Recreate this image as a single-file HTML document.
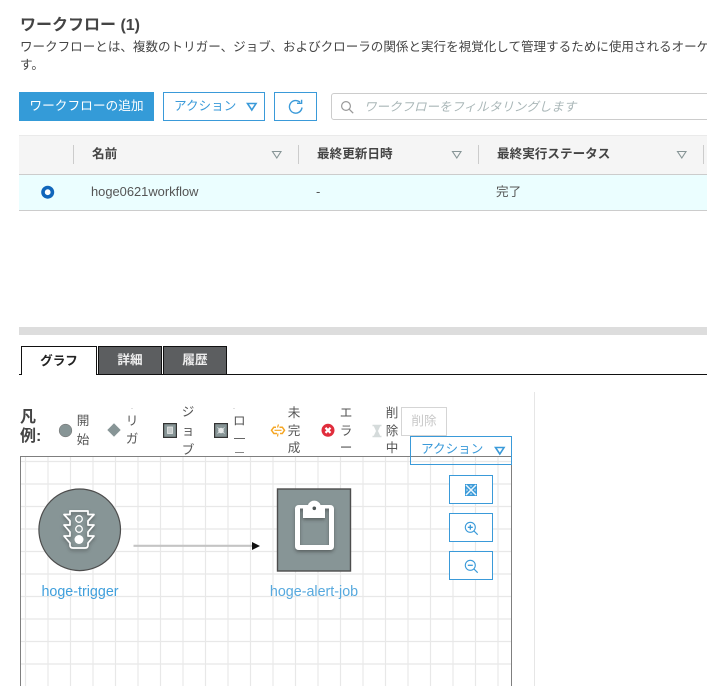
<!DOCTYPE html>
<html lang="ja">
<head>
<meta charset="utf-8">
<title>ワークフロー</title>
<style>
html,body{margin:0;padding:0;background:#fff}
body{width:707px;height:686px;position:relative;overflow:hidden;font-family:"Liberation Sans","Noto Sans CJK JP",sans-serif;color:#444}
.a{position:absolute;white-space:nowrap}
.btn{position:absolute;box-sizing:border-box;border:1px solid #3a9ad9;background:#fff;color:#3a9ad9}
.th{position:absolute;top:145px;font-size:12.6px;font-weight:bold;line-height:19px;color:#444}
.div{position:absolute;top:145px;width:1px;height:19px;background:#ccc}
.leg{position:absolute;font-size:12.6px;line-height:18px;color:#555;width:16px;text-align:center;overflow:hidden;white-space:nowrap}
.leg span{display:block}
svg{position:absolute;overflow:visible}
</style>
</head>
<body>
<div class="a" style="left:20px;top:15px;font-size:16px;font-weight:bold;line-height:22px;color:#444">ワークフロー (1)</div>
<div class="a" style="left:20px;top:38px;font-size:12.55px;line-height:18px;color:#444">ワークフローとは、複数のトリガー、ジョブ、およびクローラの関係と実行を視覚化して管理するために使用されるオーケ</div>
<div class="a" style="left:20px;top:56px;font-size:12.6px;line-height:18px;color:#444">す。</div>

<div class="a" style="left:19px;top:92px;width:135px;height:29px;background:#349bd8;color:#fff;font-size:12.7px;line-height:29px;text-align:center">ワークフローの追加</div>
<div class="btn" style="left:163px;top:92px;width:102px;height:29px"></div>
<div class="a" style="left:174px;top:92px;font-size:12.6px;line-height:28px;color:#3a9ad9">アクション</div>
<svg style="left:246px;top:102px" width="12" height="10"><path d="M1.500 1.500H10L5.800 8Z" fill="none" stroke="#3a9ad9" stroke-width="1.600"/></svg>
<div class="btn" style="left:274px;top:92px;width:43px;height:29px"></div>
<svg style="left:287px;top:99px" width="17" height="16" viewBox="0 0 17 16"><path d="M13 3.200A6.300 6.300 0 1 0 15 8.500" fill="none" stroke="#3a9ad9" stroke-width="1.400"/><path d="M10 4.300H14.600V.8" fill="none" stroke="#3a9ad9" stroke-width="1.400"/></svg>

<div class="a" style="left:331px;top:93px;width:380px;height:27px;box-sizing:border-box;border:1px solid #ccc;border-radius:3px 0 0 3px"></div>
<svg style="left:340px;top:100px" width="15" height="15" viewBox="0 0 15 15"><circle cx="6" cy="6" r="4.400" fill="none" stroke="#999" stroke-width="1.200"/><path d="M9.300 9.300L13.200 13.200" stroke="#999" stroke-width="1.300"/></svg>
<div class="a" style="left:364px;top:98px;font-size:12.5px;line-height:18px;font-style:italic;color:#aab7b8">ワークフローをフィルタリングします</div>

<div class="a" style="left:19px;top:135px;width:688px;height:39px;background:#f5f5f5;border-top:1px solid #eaeaea;box-sizing:border-box"></div>
<div class="a" style="left:19px;top:174px;width:688px;height:1px;background:#ccc"></div>
<div class="a" style="left:19px;top:175px;width:688px;height:35px;background:#ebfeff"></div>
<div class="a" style="left:19px;top:210px;width:688px;height:1px;background:#ccc"></div>
<div class="div" style="left:73px"></div>
<div class="div" style="left:298px"></div>
<div class="div" style="left:478px"></div>
<div class="div" style="left:703px"></div>
<div class="th a" style="left:92px">名前</div>
<div class="th a" style="left:317px">最終更新日時</div>
<div class="th a" style="left:497px">最終実行ステータス</div>
<svg style="left:271px;top:150px" width="12" height="10"><path d="M1.500 1.500H10L5.800 8Z" fill="none" stroke="#879596" stroke-width="1.100"/></svg>
<svg style="left:451px;top:150px" width="12" height="10"><path d="M1.500 1.500H10L5.800 8Z" fill="none" stroke="#879596" stroke-width="1.100"/></svg>
<svg style="left:676px;top:150px" width="12" height="10"><path d="M1.500 1.500H10L5.800 8Z" fill="none" stroke="#879596" stroke-width="1.100"/></svg>
<svg style="left:41px;top:185px" width="14" height="14"><circle cx="6.700" cy="7.200" r="4.700" fill="#fff" stroke="#1166bb" stroke-width="3.600"/></svg>
<div class="a" style="left:91px;top:183px;font-size:12.9px;line-height:18px;color:#555">hoge0621workflow</div>
<div class="a" style="left:316px;top:183px;font-size:13px;line-height:18px;color:#555">-</div>
<div class="a" style="left:496px;top:183px;font-size:12.6px;line-height:18px;color:#555">完了</div>

<div class="a" style="left:19px;top:327px;width:688px;height:8px;background:#ddd"></div>
<div class="a" style="left:19px;top:374px;width:688px;height:1px;background:#111"></div>
<div class="a" style="left:21px;top:346px;width:76px;height:29px;box-sizing:border-box;border:1px solid #111;border-bottom:0;background:#fff;font-size:12.6px;font-weight:bold;color:#222;text-align:center;line-height:28px">グラフ</div>
<div class="a" style="left:98px;top:346px;width:64px;height:28px;box-sizing:border-box;border:1px solid #111;border-bottom:0;background:#5c5e60;font-size:12.6px;font-weight:bold;color:#eee;text-align:center;line-height:27px">詳細</div>
<div class="a" style="left:163px;top:346px;width:64px;height:28px;box-sizing:border-box;border:1px solid #111;border-bottom:0;background:#5c5e60;font-size:12.6px;font-weight:bold;color:#eee;text-align:center;line-height:27px">履歴</div>

<div class="a" style="left:534px;top:392px;width:1px;height:294px;background:#e6e6e6"></div>

<div class="a" style="left:20px;top:408px;font-size:16px;font-weight:bold;line-height:19px;color:#444;white-space:normal;width:22px">凡<br>例:</div>
<svg style="left:58px;top:423px" width="15" height="15"><circle cx="7.500" cy="7.500" r="6.300" fill="#879596" stroke="#777" stroke-width=".6"/></svg>
<div class="leg" style="left:75px;top:412px;height:38px"><span>開</span><span style="margin-top:1px">始</span></div>
<svg style="left:106px;top:422px" width="16" height="16"><path d="M8 1.300L14.700 8L8 14.700L1.300 8Z" fill="#879596"/></svg>
<div class="leg" style="left:124px;top:405px;height:46px"><span style="height:7px;line-height:7px;font-size:4px;color:#888">・</span><span style="margin-top:0">リ</span><span>ガ</span></div>
<svg style="left:163px;top:423px" width="14" height="15"><rect x=".6" y=".6" width="12.800" height="13.800" fill="#879596" stroke="#333" stroke-width="1.200"/><rect x="4.500" y="4" width="5" height="6.500" fill="#c5cbcb" stroke="#eee" stroke-width=".7"/></svg>
<div class="leg" style="left:180px;top:405px;height:51px"><span style="margin-top:-2px">ジ</span><span style="margin-top:1px">ョ</span><span style="margin-top:1px">ブ</span></div>
<svg style="left:214px;top:423px" width="14" height="15"><rect x=".6" y=".6" width="12.800" height="13.800" fill="#879596" stroke="#333" stroke-width="1.200"/><circle cx="7" cy="7.500" r="2.800" fill="#e5e8e8"/><path d="M3.500 4.500L10.500 10.500M10.500 4.500L3.500 10.500" stroke="#e5e8e8" stroke-width=".8"/></svg>
<div class="a" style="left:232px;top:408px;font-size:4px;line-height:2px;color:#888">・</div>
<div class="a" style="left:233px;top:412px;font-size:12.6px;line-height:18px;color:#555">ロ</div>
<div class="a" style="left:234px;top:438px;width:11px;height:1px;background:#666"></div>
<div class="a" style="left:235px;top:452px;width:9px;height:1px;background:#888"></div>
<svg style="left:270px;top:423px" width="16" height="15" viewBox="0 0 16 15"><path d="M6 4.200H3.800L1.500 7.300L3.800 10.500H7M9.500 4.200H12.300L14.500 7.300L12.300 10.500H10" fill="none" stroke="#f5a623" stroke-width="1.500"/><path d="M4.500 7.300H11.500M8.500 1.500L7.500 4.500M8 10.500L7.500 13.500" stroke="#f5a623" stroke-width="1.200"/></svg>
<div class="leg" style="left:286px;top:405px;height:53px;line-height:17.500px"><span>未</span><span>完</span><span>成</span></div>
<svg style="left:321px;top:423px" width="15" height="15"><circle cx="7" cy="7.300" r="6.500" fill="#e02d3c"/><path d="M4.500 4.800L9.500 9.800M9.500 4.800L4.500 9.800" stroke="#fff" stroke-width="2.200"/></svg>
<div class="leg" style="left:338px;top:405px;height:53px;line-height:17.500px"><span>エ</span><span>ラ</span><span>ー</span></div>
<svg style="left:372px;top:424px" width="10" height="14" viewBox="0 0 10 14"><path d="M.5 .8H9.500V2.200H8.200L6 7L8.200 11.800H9.500V13.200H.5V11.800H1.800L4 7L1.800 2.200H.5Z" fill="#d5dbdb"/></svg>
<div class="leg" style="left:384px;top:405px;height:53px;line-height:17.500px"><span>削</span><span>除</span><span>中</span></div>
<div class="a" style="left:401px;top:407px;width:46px;height:29px;box-sizing:border-box;border:1px solid #d5d5d5;color:#c8c8c8;font-size:12.600px;line-height:27px;text-align:center">削除</div>

<svg style="left:0;top:0" width="707" height="686" viewBox="0 0 707 686">
<defs><filter id="s" x="-20%" y="-20%" width="140%" height="140%"><feDropShadow dx="0" dy="2" stdDeviation="1.500" flood-color="#333" flood-opacity=".5"/></filter></defs>
<g stroke="#e8e8e8" stroke-width="1.200" fill="none">
<path d="M25.500 457V686M48 457V686M70.500 457V686M93 457V686M115.500 457V686M138 457V686M160.500 457V686M183 457V686M205.500 457V686M228 457V686M250.500 457V686M273 457V686M295.500 457V686M318 457V686M340.500 457V686M363 457V686M385.500 457V686M408 457V686M430.500 457V686M453 457V686M475.500 457V686M498 457V686"/>
<path d="M21 461.500H511M21 484H511M21 506.500H511M21 529H511M21 551.500H511M21 574H511M21 596.500H511M21 619H511M21 641.500H511M21 664H511"/>
</g>
<path d="M20.500 686V456.500H511.500V686" fill="none" stroke="#7f7f7f" stroke-width="1"/>
<circle cx="79.700" cy="529.800" r="40.800" fill="#879596" stroke="#4d4d4d" stroke-width="1.200"/>
<g filter="url(#s)">
<path d="M70 511H88V514.500H94L88 521V525H94L88 532V536H94L88 543V545C88 547 87 548 85 548H73C71 548 70 547 70 545V543L64 536H70V532L64 525H70V521L64 514.500H70Z" fill="none" stroke="#fff" stroke-width="1.700" stroke-linejoin="round"/>
</g>
<circle cx="79" cy="519" r="3.300" fill="none" stroke="#fff" stroke-width="1.300"/>
<circle cx="79" cy="529" r="3.300" fill="none" stroke="#fff" stroke-width="1.300"/>
<circle cx="79" cy="539.500" r="4.500" fill="#fff"/>
<rect x="277.500" y="489" width="73" height="82" fill="#879596" stroke="#4d4d4d" stroke-width="1.400"/>
<g filter="url(#s)">
<path fill-rule="evenodd" fill="#fff" d="M299 505H308A6.500 6 0 0 1 320.500 505H330C332.500 505 334 506.500 334 509V546C334 548.500 332.500 550 330 550H299C296.500 550 295 548.500 295 546V509C295 506.500 296.500 505 299 505ZM300 508.500V545H329V508.500H325V518H303V508.500Z"/>
</g>
<circle cx="314.300" cy="508.300" r="1.800" fill="#4d5555"/>
<path d="M133.500 545.800H256" stroke="#c4c4c4" stroke-width="2.200"/>
<path d="M252 542L260 546L252 550Z" fill="#111"/>
<text x="80" y="596" text-anchor="middle" font-family="Liberation Sans" font-size="14.300" fill="#3f9fdc">hoge-trigger</text>
<text x="314" y="596" text-anchor="middle" font-family="Liberation Sans" font-size="14.300" fill="#57a9de">hoge-alert-job</text>
</svg>

<div class="a" style="left:410px;top:436px;width:102px;height:29px;box-sizing:border-box;border:1px solid #3a9ad9"></div>
<div class="a" style="left:421px;top:436px;font-size:12.600px;line-height:27px;color:#3a9ad9">アクション</div>
<svg style="left:494px;top:446px" width="12" height="10"><path d="M1.500 1.500H10L5.800 8Z" fill="none" stroke="#3a9ad9" stroke-width="1.600"/></svg>

<div class="btn" style="left:449px;top:475px;width:44px;height:29px"></div>
<svg style="left:465px;top:484px" width="12" height="12" viewBox="0 0 12 12"><rect width="12" height="12" fill="#3a9ad9"/><path d="M1 1L11 11M11 1L1 11" stroke="#eef7fc" stroke-width="1.500"/><path d="M4.500 1.500H7.500L6 3ZM4.500 10.500H7.500L6 9ZM1.500 4.500V7.500L3 6ZM10.500 4.500V7.500L9 6Z" fill="#cfe7f6"/></svg>
<div class="btn" style="left:449px;top:513px;width:44px;height:29px"></div>
<svg style="left:464px;top:521px" width="15" height="15" viewBox="0 0 15 15"><circle cx="6.300" cy="6.300" r="5" fill="none" stroke="#3a9ad9" stroke-width="1.100"/><path d="M10 10L13.700 13.700" stroke="#3a9ad9" stroke-width="1.200"/><path d="M3.800 6.300H8.800M6.300 3.800V8.800" stroke="#3a9ad9" stroke-width="1.300"/></svg>
<div class="btn" style="left:449px;top:551px;width:44px;height:29px"></div>
<svg style="left:464px;top:559px" width="15" height="15" viewBox="0 0 15 15"><circle cx="6.300" cy="6.300" r="5" fill="none" stroke="#3a9ad9" stroke-width="1.100"/><path d="M10 10L13.700 13.700" stroke="#3a9ad9" stroke-width="1.200"/><path d="M3.800 6.300H8.800" stroke="#3a9ad9" stroke-width="1.300"/></svg>
</body>
</html>
